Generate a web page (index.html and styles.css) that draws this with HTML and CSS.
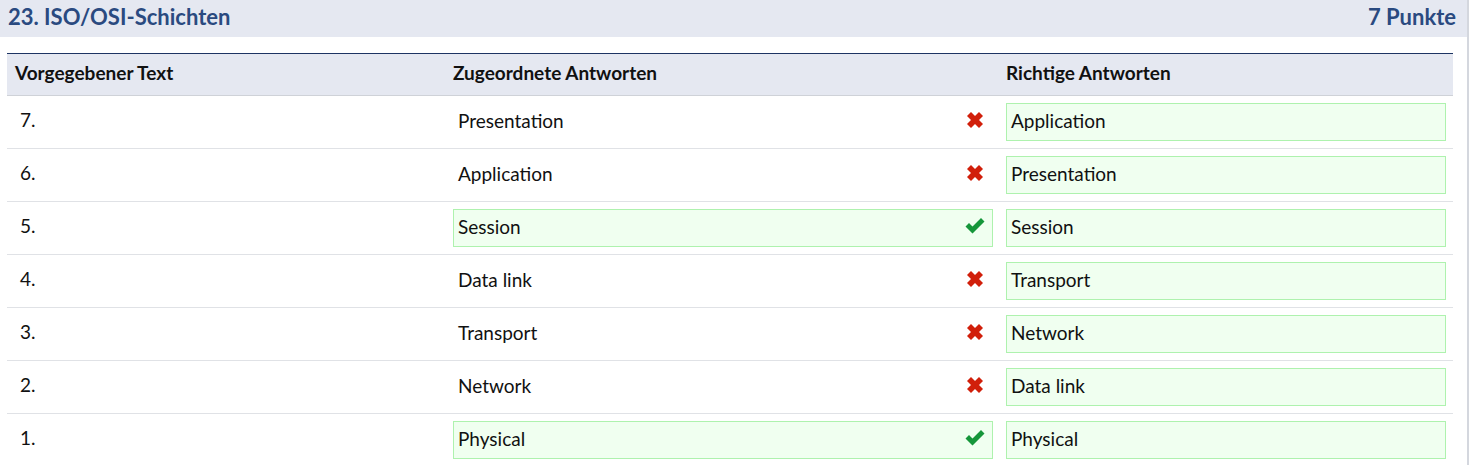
FILE: index.html
```html
<!DOCTYPE html>
<html lang="de">
<head>
    <meta charset="UTF-8">
    <meta name="viewport" content="width=device-width, initial-scale=1.0">
    <title>ISO/OSI-Schichten</title>
    <link rel="stylesheet" href="styles.css">
</head>
<body>
    <div class="question">
        <div class="question-head">
            <span class="question-title">23. ISO/OSI-Schichten</span>
            <span class="question-points">7 Punkte</span>
        </div>

        <table class="match-table">
            <colgroup>
                <col class="col-given">
                <col class="col-answer">
                <col class="col-correct">
            </colgroup>
            <thead>
                <tr>
                    <th>Vorgegebener Text</th>
                    <th>Zugeordnete Antworten</th>
                    <th>Richtige Antworten</th>
                </tr>
            </thead>
            <tbody>
                <tr>
                    <td class="given">7.</td>
                    <td class="answer"><div class="box">Presentation <svg class="icon wrong" viewBox="0 0 18 18"><path d="M1 5 5 1 9 5 13 1 17 5 13 9 17 13 13 17 9 13 5 17 1 13 5 9Z"/></svg></div></td>
                    <td class="correct"><div class="box ok">Application</div></td>
                </tr>
                <tr>
                    <td class="given">6.</td>
                    <td class="answer"><div class="box">Application <svg class="icon wrong" viewBox="0 0 18 18"><path d="M1 5 5 1 9 5 13 1 17 5 13 9 17 13 13 17 9 13 5 17 1 13 5 9Z"/></svg></div></td>
                    <td class="correct"><div class="box ok">Presentation</div></td>
                </tr>
                <tr>
                    <td class="given">5.</td>
                    <td class="answer"><div class="box ok">Session <svg class="icon right" viewBox="0 0 20 16"><path d="M0.5 8.5 4 5 7.5 8.5 16 0 19.5 3.5 7.5 15.5Z"/></svg></div></td>
                    <td class="correct"><div class="box ok">Session</div></td>
                </tr>
                <tr>
                    <td class="given">4.</td>
                    <td class="answer"><div class="box">Data link <svg class="icon wrong" viewBox="0 0 18 18"><path d="M1 5 5 1 9 5 13 1 17 5 13 9 17 13 13 17 9 13 5 17 1 13 5 9Z"/></svg></div></td>
                    <td class="correct"><div class="box ok">Transport</div></td>
                </tr>
                <tr>
                    <td class="given">3.</td>
                    <td class="answer"><div class="box">Transport <svg class="icon wrong" viewBox="0 0 18 18"><path d="M1 5 5 1 9 5 13 1 17 5 13 9 17 13 13 17 9 13 5 17 1 13 5 9Z"/></svg></div></td>
                    <td class="correct"><div class="box ok">Network</div></td>
                </tr>
                <tr>
                    <td class="given">2.</td>
                    <td class="answer"><div class="box">Network <svg class="icon wrong" viewBox="0 0 18 18"><path d="M1 5 5 1 9 5 13 1 17 5 13 9 17 13 13 17 9 13 5 17 1 13 5 9Z"/></svg></div></td>
                    <td class="correct"><div class="box ok">Data link</div></td>
                </tr>
                <tr>
                    <td class="given">1.</td>
                    <td class="answer"><div class="box ok">Physical <svg class="icon right" viewBox="0 0 20 16"><path d="M0.5 8.5 4 5 7.5 8.5 16 0 19.5 3.5 7.5 15.5Z"/></svg></div></td>
                    <td class="correct"><div class="box ok">Physical</div></td>
                </tr>
            </tbody>
        </table>
    </div>
</body>
</html>
```

FILE: styles.css
```css
/* Ergebnisansicht einer Zuordnungsfrage */
body {
    margin: 0;
    font-family: Lato, "Open Sans", sans-serif;
    color: #111;
    background: #fff;
}
.question {
    width: 1467px;
    border-right: 2px solid #d4d7de;
    padding-bottom: 20px;
}
.question-head {
    display: flex;
    justify-content: space-between;
    align-items: center;
    height: 33px;
    padding: 0 11px 4px 8px;
    background: #e5e8f1;
    color: #2a4a80;
    font-size: 22px;
    font-weight: bold;
}
.match-table {
    width: 1446px;
    margin: 16px 0 0 7px;
    border-collapse: collapse;
    table-layout: fixed;
    border-top: 1px solid #1d3463;
    font-size: 19px;
}
.col-given { width: 438px; }
.col-answer { width: 553px; }
.col-correct { width: 455px; }
th {
    text-align: left;
    height: 37px;
    padding: 0 8px 4px;
    background: #e5e8f1;
    border-bottom: 1px solid #cfd2d8;
    font-weight: bold;
}
td {
    height: 52px;
    padding: 0 8px;
    border-bottom: 1px solid #e0e2e6;
}
td.given {
    height: 47px;
    padding-left: 13px;
    padding-bottom: 5px;
}
td.answer {
    padding-right: 5px;
}
td.correct {
    padding-right: 7px;
}
.box {
    display: flex;
    justify-content: space-between;
    align-items: center;
    height: 32px;
    padding: 0 7px 4px 4px;
    border: 1px solid transparent;
}
.box.ok {
    background: #f0fff0;
    border-color: #aef2ae;
}
.icon {
    width: 20px;
    height: 16px;
}
.icon.wrong {
    width: 18px;
    height: 18px;
    margin-right: 1px;
    fill: #d11f0a;
}
.icon.right {
    fill: #15963a;
}
```
